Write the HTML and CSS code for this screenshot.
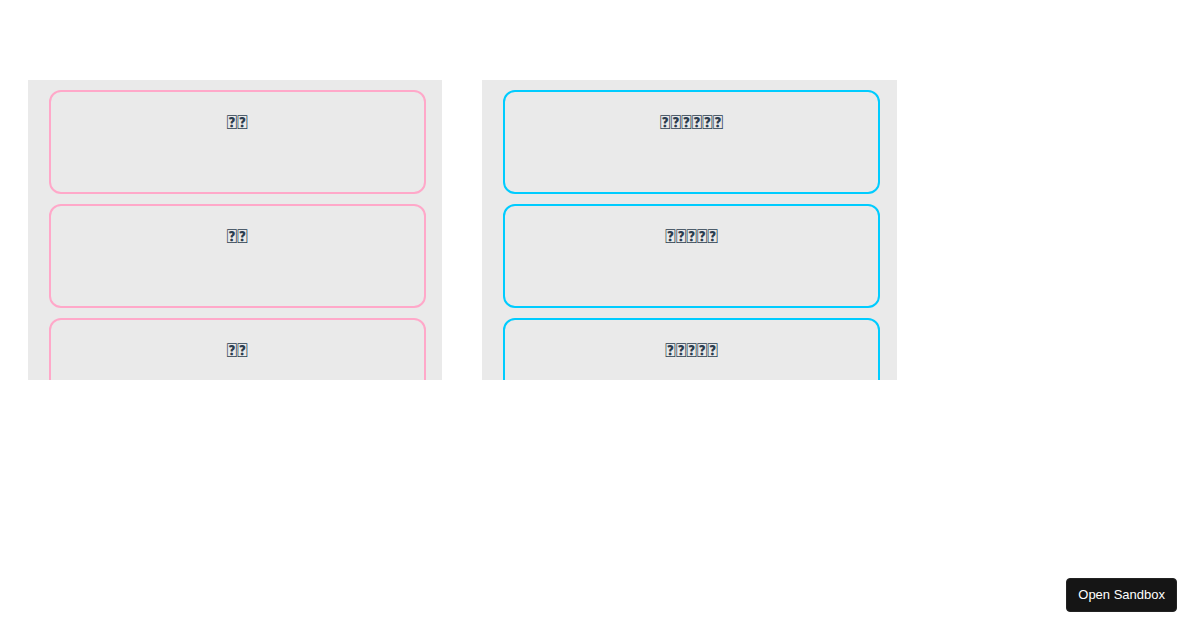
FILE: index.html
```html
<!DOCTYPE html>
<html lang="en">
<head>
  <meta charset="UTF-8">
  <meta name="viewport" content="width=device-width, initial-scale=1.0">
  <title>Sandbox</title>
  <link rel="stylesheet" href="styles.css">
</head>
<body>
  <main class="boards">
    <section class="board pink">
      <div class="card">&#xE123;&#xE123;</div>
      <div class="card">&#xE123;&#xE123;</div>
      <div class="card">&#xE123;&#xE123;</div>
    </section>
    <section class="board blue">
      <div class="card">&#xE123;&#xE123;&#xE123;&#xE123;&#xE123;&#xE123;</div>
      <div class="card">&#xE123;&#xE123;&#xE123;&#xE123;&#xE123;</div>
      <div class="card">&#xE123;&#xE123;&#xE123;&#xE123;&#xE123;</div>
    </section>
  </main>
  <button class="open-btn" type="button">Open Sandbox</button>
</body>
</html>
```
FILE: styles.css
```css
body {
  margin: 8px;
  background: #fff;
  font-family: "Liberation Sans", Arial, sans-serif;
}
.boards {
  display: flex;
  padding-top: 72px;
}
.board {
  width: 35%;
  height: 300px;
  margin: 0 20px;
  background: #eaeaea;
  overflow-y: auto;
}
.card {
  box-sizing: border-box;
  height: 104px;
  margin: 10px 4% 10px 5%;
  padding: 20px;
  border: 2px solid;
  border-radius: 12px;
  color: #2c3e50;
  font-family: Lato, sans-serif;
  font-size: 19px;
  font-weight: 900;
  line-height: 20px;
  text-align: center;
}
.pink .card { border-color: #ffa8c9; }
.blue .card { border-color: #00ccff; }

.open-btn {
  position: fixed;
  right: 23px;
  bottom: 18px;
  height: 34px;
  padding: 0 11px 2px;
  border: 1px solid #222;
  border-radius: 4px;
  background: #151515;
  color: #fff;
  font-family: inherit;
  font-size: 13px;
  cursor: pointer;
}
```
